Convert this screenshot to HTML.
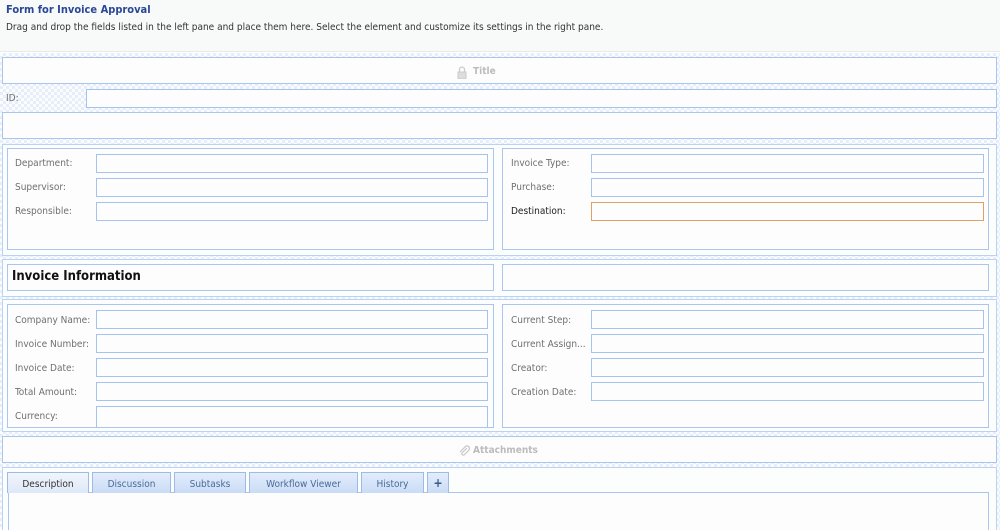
<!DOCTYPE html>
<html style="width:1000px;height:530px;overflow:hidden"><head><style>
*{box-sizing:border-box;margin:0;padding:0}
body{width:1000px;height:530px;overflow:hidden;font-family:Tahoma,"DejaVu Sans Condensed","Liberation Sans",sans-serif;font-size:10px;color:#777;background:#fff;position:relative}
.hd{position:absolute;left:0;top:0;width:1000px;height:52px;background:#f8f9f9;border-bottom:1px solid #e6eaea}
.bg{position:absolute;left:0;top:53px;width:1000px;height:477px;background-color:#fff;background-image:repeating-conic-gradient(#e6eef9 0 25%,#fafcff 0 50%);background-size:6px 6px}
.b{position:absolute;border:1px solid #aac6ee;background:#fdfdfd}
.o{position:absolute;border:1px solid #bcd2f2;background:#fcfdfd}
.l{position:absolute;font-size:10px;color:#6f6f6f}
.i{position:absolute;height:19px;border:1px solid #a6c2ee;background:#fdfdfd}
.tab{position:absolute;top:472px;height:21px;border:1px solid #9dbbe6;border-bottom:none;background:linear-gradient(#e3edfb,#c9dcf6);font-size:10px;color:#4a6a99;text-align:center;line-height:23px}
</style></head><body>
<div class="hd">
<div style="position:absolute;left:6px;top:3px;font-weight:bold;font-size:11px;color:#2a4795">Form for Invoice Approval</div>
<div style="position:absolute;left:6px;top:22px;font-size:10px;color:#333">Drag and drop the fields listed in the left pane and place them here. Select the element and customize its settings in the right pane.</div>
</div>
<div class="bg"></div>

<div class="b" style="left:2px;top:57px;width:995px;height:27px"></div>
<div style="position:absolute;left:457px;top:66px;width:10px;height:13px">
<svg width="10" height="13"><path d="M2.5 6V3.5a2.5 2.5 0 0 1 5 0V6" fill="none" stroke="#ccc" stroke-width="1.3"/><rect x="1" y="6" width="8" height="7" fill="#ddd" stroke="#ccc"/></svg></div>
<div class="l" style="left:473px;top:66px;font-weight:bold;color:#bbb">Title</div>

<div class="l" style="left:6px;top:93px">ID:</div>
<div class="i" style="left:86px;top:89px;width:911px;height:19px"></div>

<div class="b" style="left:2px;top:112px;width:995px;height:27px"></div>

<div class="o" style="left:2px;top:144px;width:995px;height:112px"></div>
<div class="b" style="left:7px;top:148px;width:487px;height:102px"></div>
<div class="b" style="left:502px;top:148px;width:487px;height:102px"></div>
<div class="l" style="left:15px;top:158px">Department:</div><div class="i" style="left:96px;top:154px;width:392px"></div>
<div class="l" style="left:15px;top:182px">Supervisor:</div><div class="i" style="left:96px;top:178px;width:392px"></div>
<div class="l" style="left:15px;top:206px">Responsible:</div><div class="i" style="left:96px;top:202px;width:392px"></div>
<div class="l" style="left:511px;top:158px">Invoice Type:</div><div class="i" style="left:591px;top:154px;width:393px"></div>
<div class="l" style="left:511px;top:182px">Purchase:</div><div class="i" style="left:591px;top:178px;width:393px"></div>
<div class="l" style="left:511px;top:206px;color:#222">Destination:</div><div class="i" style="left:591px;top:202px;width:393px;border-color:#e0a060"></div>

<div class="o" style="left:2px;top:259px;width:995px;height:38px"></div>
<div class="b" style="left:7px;top:264px;width:487px;height:27px"></div>
<div class="b" style="left:502px;top:264px;width:487px;height:27px"></div>
<div style="position:absolute;left:12px;top:269px;font-weight:bold;font-size:13px;color:#111">Invoice Information</div>

<div class="o" style="left:2px;top:299px;width:995px;height:133px"></div>
<div class="b" style="left:7px;top:304px;width:487px;height:124px;overflow:hidden">
<div class="l" style="left:7px;top:10px">Company Name:</div><div class="i" style="left:88px;top:5px;width:392px"></div>
<div class="l" style="left:7px;top:34px">Invoice Number:</div><div class="i" style="left:88px;top:29px;width:392px"></div>
<div class="l" style="left:7px;top:58px">Invoice Date:</div><div class="i" style="left:88px;top:53px;width:392px"></div>
<div class="l" style="left:7px;top:82px">Total Amount:</div><div class="i" style="left:88px;top:77px;width:392px"></div>
<div class="l" style="left:7px;top:106px">Currency:</div><div class="i" style="left:88px;top:101px;width:392px;height:25px"></div>
</div>
<div class="b" style="left:502px;top:304px;width:487px;height:124px">
<div class="l" style="left:8px;top:10px">Current Step:</div><div class="i" style="left:88px;top:5px;width:393px"></div>
<div class="l" style="left:8px;top:34px">Current Assign...</div><div class="i" style="left:88px;top:29px;width:393px"></div>
<div class="l" style="left:8px;top:58px">Creator:</div><div class="i" style="left:88px;top:53px;width:393px"></div>
<div class="l" style="left:8px;top:82px">Creation Date:</div><div class="i" style="left:88px;top:77px;width:393px"></div>
</div>

<div class="b" style="left:2px;top:436px;width:995px;height:27px"></div>
<div style="position:absolute;left:458px;top:445px"><svg width="12" height="12"><path d="M9 3 4 8a1.5 1.5 0 0 0 2 2l5-5a2.5 2.5 0 0 0-3.5-3.5L2 7" fill="none" stroke="#c8c8c8" stroke-width="1.2"/></svg></div>
<div class="l" style="left:473px;top:445px;font-weight:bold;color:#bbb">Attachments</div>

<div class="o" style="left:2px;top:467px;width:995px;height:63px;border-bottom:none"></div>
<div class="b" style="left:8px;top:492px;width:981px;height:38px;border-bottom:none"></div>
<div class="tab" style="left:7px;width:82px;background:linear-gradient(#f2f6fc,#dde8f8);color:#333">Description</div>
<div class="tab" style="left:92px;width:79px">Discussion</div>
<div class="tab" style="left:174px;width:72px">Subtasks</div>
<div class="tab" style="left:249px;width:109px">Workflow Viewer</div>
<div class="tab" style="left:361px;width:63px">History</div>
<div class="tab" style="left:427px;width:22px;font-weight:bold;font-size:12px;color:#35588e;line-height:20px">+</div>
</body></html>
